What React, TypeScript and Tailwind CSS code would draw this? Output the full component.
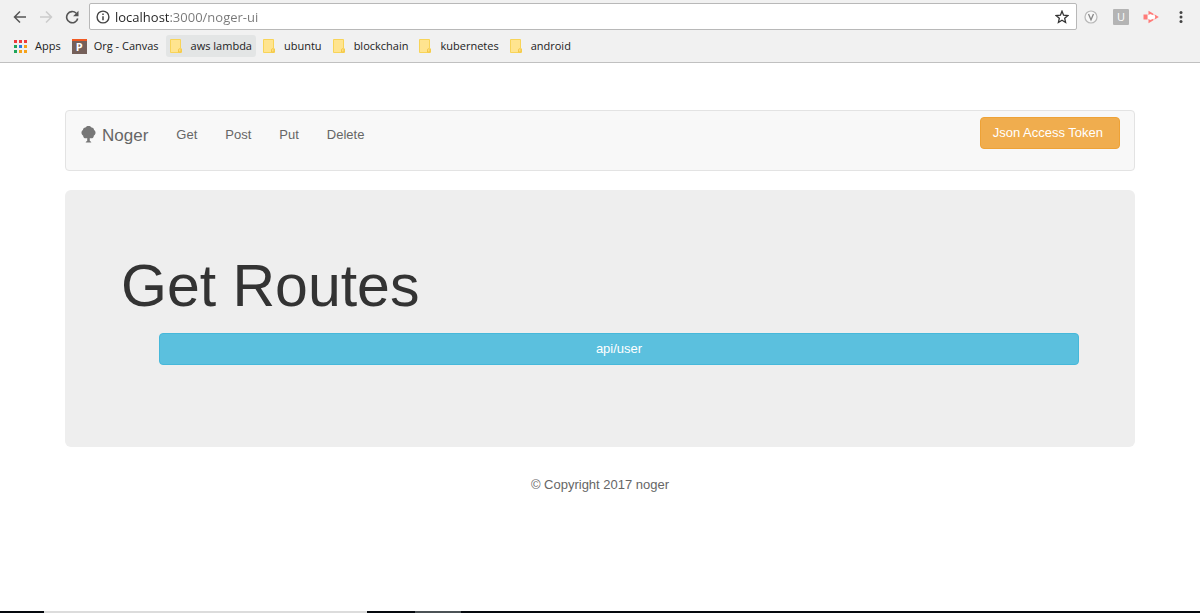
import type { ReactNode } from 'react'

const bookmarks = ['aws lambda', 'ubuntu', 'blockchain', 'kubernetes', 'android']
const methods = ['Get', 'Post', 'Put', 'Delete']
const appDots = [
  '#ee3b3b', '#ee3b3b', '#ee3b3b',
  '#1fa55b', '#2a7de1', '#f6a21b',
  '#1fa55b', '#f6a21b', '#f6a21b',
]

function IconButton({ label, children }: { label: string; children: ReactNode }) {
  return (
    <button type="button" aria-label={label} className="flex h-4 w-4 shrink-0 items-center justify-center">
      {children}
    </button>
  )
}

function AppsIcon() {
  return (
    <svg width="13" height="13" viewBox="0 0 13 13" aria-hidden="true">
      {appDots.map((color, i) => (
        <rect key={i} x={(i % 3) * 5} y={Math.floor(i / 3) * 5} width="3" height="3" fill={color} />
      ))}
    </svg>
  )
}

function FolderIcon() {
  return (
    <svg width="12" height="14" viewBox="0 0 12 14" aria-hidden="true">
      <path d="M.5.5h10v8.500l1 1v3.500H.5z" fill="#ffe48f" stroke="#f8d458" />
      <path d="M8.500 13v-2.500c0-1 2.500-1 2.500 0V13z" fill="#ffe07a" stroke="#f0c040" strokeWidth=".8" />
    </svg>
  )
}

function TreeIcon() {
  return (
    <svg width="15" height="20" viewBox="0 0 15 20" fill="#777" aria-hidden="true">
      <path d="M7.500 0C9.200 0 10 .7 10.500 1.500c1.600 0 2.500 1 2.500 2.500 1.100.7 1.700 1.900 1.500 3.200-.2 1.300-1 1.900-1.600 2.200-.1 1.900-1.200 2.900-2.700 2.900-.6 0-1-.1-1.400-.3v3c.8.1 1.400.6 1.500 1.500H4.700c.1-.9.700-1.400 1.500-1.500v-3c-.4.2-.8.300-1.400.300-1.500 0-2.600-1-2.700-2.900C1.500 9.100.7 8.500.5 7.200.3 5.900.9 4.700 2 4c0-1.500.9-2.500 2.500-2.500C5 .7 5.800 0 7.500 0z" />
    </svg>
  )
}

function AddressBar() {
  return (
    <div className="flex h-[27px] flex-1 items-center rounded-xs border border-[#b8b8b8] bg-white px-[6px]">
      <svg width="14" height="14" viewBox="0 0 14 14" fill="none" stroke="#444" aria-hidden="true">
        <circle cx="7" cy="7" r="5.900" strokeWidth="1.400" />
        <path d="M7 6.200v4M7 3.600v1.500" strokeWidth="1.500" />
      </svg>
      <input
        aria-label="Address"
        defaultValue="localhost:3000/noger-ui"
        className="ml-[5px] min-w-0 flex-1 bg-linear-to-r from-[#222] from-[54px] to-[#777] to-[54px] bg-clip-text text-[13px] leading-5 text-transparent caret-black outline-none"
      />
      <IconButton label="Bookmark this page">
        <svg width="14" height="14" viewBox="0 0 14 14" fill="none" stroke="#333" strokeWidth="1.300" aria-hidden="true">
          <path d="M7 1.200l1.600 4 4.300.4-3.200 2.700.9 4.200L7 10.300l-3.600 2.200.9-4.200L1.100 5.600l4.300-.4z" />
        </svg>
      </IconButton>
    </div>
  )
}

function BrowserChrome() {
  return (
    <header className="border-b border-[#c0c0c0] bg-[#f1f1f1] pb-[5px] pt-[3px] font-['Open_Sans',sans-serif]">
      <div className="flex items-center pl-3 pr-[11px]">
        <div className="flex items-center gap-[10px] pr-[9px]">
          <IconButton label="Back">
            <svg width="14" height="14" viewBox="0 0 14 14" fill="none" stroke="#555" strokeWidth="1.500" aria-hidden="true">
              <path d="M13 7H2M7 1.500L1.500 7 7 12.500" />
            </svg>
          </IconButton>
          <IconButton label="Forward">
            <svg width="14" height="14" viewBox="0 0 14 14" fill="none" stroke="#ccc" strokeWidth="1.500" aria-hidden="true">
              <path d="M1 7h11M7 1.500L12.500 7 7 12.500" />
            </svg>
          </IconButton>
          <IconButton label="Reload">
            <svg width="14" height="14" viewBox="0 0 14 14" fill="none" aria-hidden="true">
              <path d="M12.700 8.500A5.600 5.600 0 1 1 11.200 3.200" stroke="#555" strokeWidth="1.600" />
              <path d="M13.500.8v5.400H8.100z" fill="#555" />
            </svg>
          </IconButton>
        </div>
        <AddressBar />
        <div className="flex items-center gap-[14px] pl-[6px]">
          <IconButton label="Vue devtools">
            <svg width="14" height="14" viewBox="0 0 14 14" fill="none" aria-hidden="true">
              <circle cx="7" cy="7" r="6" stroke="#b8b8b8" strokeWidth="1.200" fill="#f8f8f8" />
              <path d="M4.500 4L7 9.800 9.500 4" stroke="#888" strokeWidth="1.300" />
            </svg>
          </IconButton>
          <button type="button" className="flex h-4 w-4 items-center justify-center rounded-[1px] bg-[#b4b4b4] text-[11px] leading-4 text-white">
            U
          </button>
          <IconButton label="Screen recorder">
            <svg width="16" height="14" viewBox="0 0 16 14" fill="#ff7b78" aria-hidden="true">
              <path d="M5 4.500L11 3.500 13 7l-2 3.500L5 9.500z" fill="#fff" />
              <path d="M.5 4.500h4v5h-4z" />
              <path d="M5.500.8L10.500 3.700V5.200L7 4 5.500 5.300zM5.500 13.200L10.500 10.300V8.800L7 10 5.500 8.700zM11.300 4.300L15.800 7l-4.500 2.700 1-2.700z" />
            </svg>
          </IconButton>
          <IconButton label="Menu">
            <svg width="4" height="14" viewBox="0 0 4 14" fill="#444" aria-hidden="true">
              <circle cx="2" cy="2.500" r="1.500" />
              <circle cx="2" cy="7" r="1.500" />
              <circle cx="2" cy="11.500" r="1.500" />
            </svg>
          </IconButton>
        </div>
      </div>
      <nav aria-label="Bookmarks" className="mt-[5px] flex items-center gap-[3px] pl-[10px] text-[11px] leading-[22px] text-[#222]">
        <a href="#apps" className="flex items-center gap-2 px-1">
          <AppsIcon />
          Apps
        </a>
        <a href="#canvas" className="flex items-center gap-[7px] px-1">
          <span className="flex h-[15px] w-[15px] items-center justify-center border-t-2 border-[#f15a22] bg-[#75605a] text-[11px] font-bold leading-3 text-white">
            P
          </span>
          Org - Canvas
        </a>
        {bookmarks.map((name, i) => (
          <a
            key={name}
            href="#bookmark"
            className={`flex items-center gap-[9px] rounded-[3px] px-1 ${i === 0 ? 'bg-[#e3e5e5]' : ''}`}
          >
            <FolderIcon />
            {name}
          </a>
        ))}
      </nav>
    </header>
  )
}

export default function App() {
  return (
    <div className="flex min-h-screen flex-col bg-white font-['Liberation_Sans',Arial,sans-serif] text-[13px] leading-5 text-[#333]">
      <BrowserChrome />
      <main className="mx-[65px] mt-[47px]">
        <nav aria-label="Main" className="flex min-h-[61px] items-start rounded border border-[#e3e3e3] bg-[#f8f8f8] px-[14px] pt-[6px] text-[#666]">
          <a href="#home" className="flex items-center gap-[6px] py-2 pl-px text-[17px] leading-[22px]">
            <TreeIcon />
            Noger
          </a>
          <div className="flex flex-1 gap-7 py-2 pl-7 leading-5">
            {methods.map((m) => (
              <a key={m} href={`#${m}`}>{m}</a>
            ))}
          </div>
          <button type="button" className="rounded border border-[#eea236] bg-[#f0ad4e] pl-3 pr-4 leading-[30px] text-white">
            Json Access Token
          </button>
        </nav>
        <section className="mt-[19px] rounded-md bg-[#eee] px-14 pb-[82px] pt-16">
          <h1 className="text-[59px] leading-[65px]">Get Routes</h1>
          <ul className="mt-[14px] pl-[38px]">
            <li>
              <button type="button" className="block w-full rounded border border-[#46b8da] bg-[#5bc0de] leading-[30px] text-white">
                api/user
              </button>
            </li>
          </ul>
        </section>
        <p className="mt-7 text-center text-[#666]">© Copyright 2017 noger</p>
      </main>
      <div className="mt-auto flex h-[2px] bg-[#05090e]">
        <div className="ml-11 w-[323px] bg-[#dcdcdc]" />
        <div className="ml-12 w-[46px] bg-[#4b5256]" />
      </div>
    </div>
  )
}
